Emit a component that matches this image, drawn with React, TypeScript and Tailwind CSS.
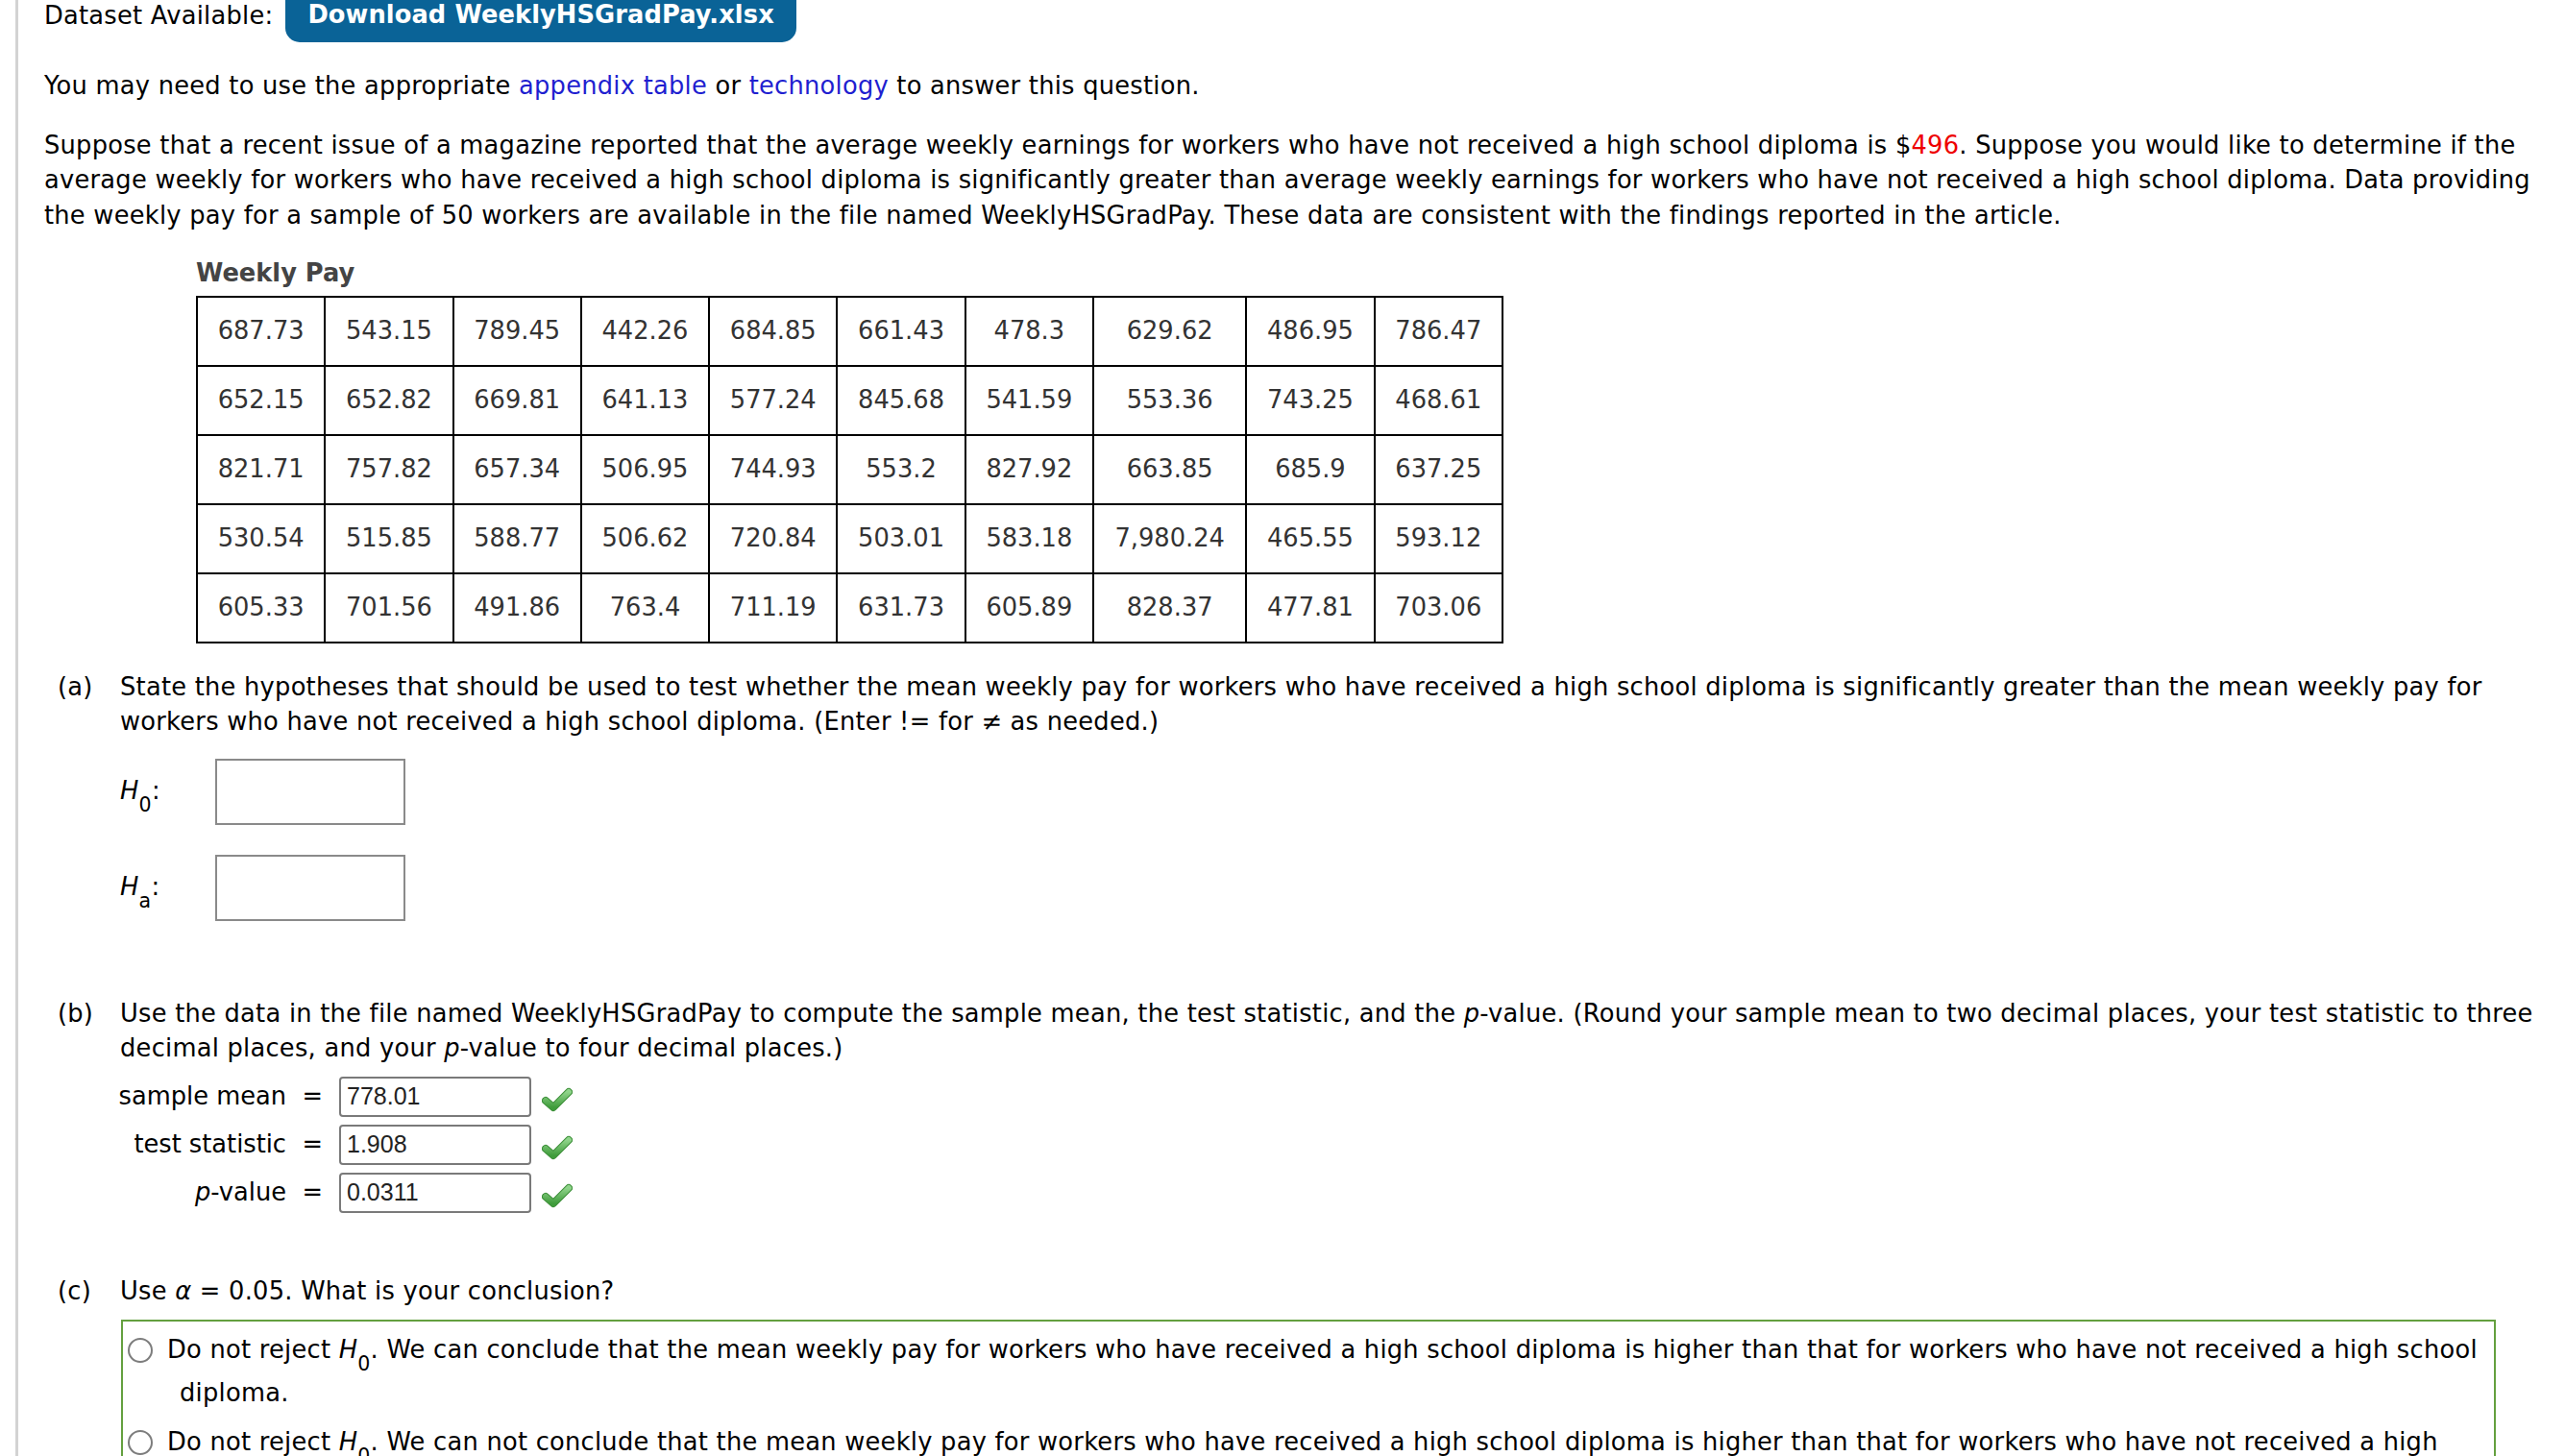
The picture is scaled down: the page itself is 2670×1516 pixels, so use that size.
import React from 'react';

const PAY: string[][] = [
  ['687.73', '543.15', '789.45', '442.26', '684.85', '661.43', '478.3', '629.62', '486.95', '786.47'],
  ['652.15', '652.82', '669.81', '641.13', '577.24', '845.68', '541.59', '553.36', '743.25', '468.61'],
  ['821.71', '757.82', '657.34', '506.95', '744.93', '553.2', '827.92', '663.85', '685.9', '637.25'],
  ['530.54', '515.85', '588.77', '506.62', '720.84', '503.01', '583.18', '7,980.24', '465.55', '593.12'],
  ['605.33', '701.56', '491.86', '763.4', '711.19', '631.73', '605.89', '828.37', '477.81', '703.06'],
];

const OPTIONS = [
  'We can conclude that the mean weekly pay for workers who have received a high school diploma is higher than that for workers who have not received a high school diploma.',
  'We can not conclude that the mean weekly pay for workers who have received a high school diploma is higher than that for workers who have not received a high school diploma.',
];

function H({ sub }: { sub: string }) {
  return (
    <span>
      <i>H</i>
      <sub className="text-[0.8em] leading-none align-[-0.4em]">{sub}</sub>
    </span>
  );
}

function Check() {
  return (
    <svg width="32" height="26" viewBox="0 0 32 26" className="ml-[11px] mt-[6px]">
      <defs>
        <linearGradient id="ck" x1="0" y1="0" x2="0" y2="1">
          <stop offset="0" stopColor="#8fd48a" />
          <stop offset="1" stopColor="#3f9c3b" />
        </linearGradient>
      </defs>
      <path d="M4 14 L12 21 L28 5" fill="none" stroke="#3d8f39" strokeWidth="8" strokeLinecap="round" strokeLinejoin="round" />
      <path d="M4 14 L12 21 L28 5" fill="none" stroke="url(#ck)" strokeWidth="6" strokeLinecap="round" strokeLinejoin="round" />
    </svg>
  );
}

function AnswerRow({ label, value }: { label: React.ReactNode; value: string }) {
  return (
    <div className="flex items-center h-[42px]">
      <div className="w-[173px] flex justify-end whitespace-nowrap tracking-normal">{label}</div>
      <div className="w-[55px] text-center">=</div>
      <div className="w-[200px] h-[42px] border-2 border-[#7a7a7a] rounded-[4px] pl-[6px] flex items-center font-['Liberation_Sans',Arial,sans-serif] text-[25px] tracking-normal text-[#222]">
        {value}
      </div>
      <Check />
    </div>
  );
}

function Part({ tag, children }: { tag: string; children: React.ReactNode }) {
  return (
    <div className="flex pl-[14px]">
      <div className="w-[65px] shrink-0">{tag}</div>
      <div className="flex-1">{children}</div>
    </div>
  );
}

function Radio({ reject, text }: { reject: boolean; text: string }) {
  return (
    <div className="pl-[59px] -indent-[54px] leading-[45px] pr-[12px]">
      <span className="inline-block w-[26px] h-[26px] rounded-full border-2 border-[#7d7d7d] bg-white align-[-5px] mr-[15px] indent-0"></span>
      {reject ? 'Reject ' : 'Do not reject '}
      <H sub="0" />. {text}
    </div>
  );
}

export default function App() {
  return (
    <div className="min-h-screen bg-white overflow-hidden font-['DejaVu_Sans',Verdana,sans-serif] text-[25.7px] leading-[36.5px] tracking-[0.26px] text-black">
      <div className="ml-[16px] border-l-[3px] border-[#d3d3d3] pl-[27px] w-[2644px] min-h-[1600px] -mt-[14px]">
        <div className="w-[2614px]">
          {/* dataset */}
          <div className="flex items-center gap-[13px] h-[58px] pt-[2px]">
            <span>Dataset Available:</span>
            <span className="h-[58px] -mt-[2px] px-[23px] rounded-[15px] bg-[#0a6397] text-white font-bold tracking-[0.1px] flex items-center">
              Download WeeklyHSGradPay.xlsx
            </span>
          </div>

          <p className="mt-[27px]">
            You may need to use the appropriate <span className="text-[#1f1fd0]">appendix table</span> or{' '}
            <span className="text-[#1f1fd0]">technology</span> to answer this question.
          </p>

          <p className="mt-[25px]">
            Suppose that a recent issue of a magazine reported that the average weekly earnings for workers who have not
            received a high school diploma is $<span className="text-[#ee0000]">496</span>. Suppose you would like to
            determine if the average weekly for workers who have received a high school diploma is significantly greater
            than average weekly earnings for workers who have not received a high school diploma. Data providing the
            weekly pay for a sample of 50 workers are available in the file named WeeklyHSGradPay. These data are
            consistent with the findings reported in the article.
          </p>

          {/* table */}
          <div className="ml-[158px] mt-[24px]">
            <div className="font-bold text-[#444] tracking-normal">Weekly Pay</div>
            <table className="mt-[5px] border-collapse table-fixed w-[1361px] text-[#333] tracking-normal">
              <tbody>
                {PAY.map((row, i) => (
                  <tr key={i}>
                    {row.map((v, j) => (
                      <td
                        key={j}
                        className={`border-2 border-black h-[72px] p-0 text-center ${j === 7 ? 'w-[159px]' : 'w-[133px]'}`}
                      >
                        {v}
                      </td>
                    ))}
                  </tr>
                ))}
              </tbody>
            </table>
          </div>

          {/* (a) */}
          <div className="mt-[27px]">
            <Part tag="(a)">
              State the hypotheses that should be used to test whether the mean weekly pay for workers who have received
              a high school diploma is significantly greater than the mean weekly pay for workers who have not received a
              high school diploma. (Enter != for ≠ as needed.)
              <div className="mt-[20px] flex items-center">
                <div className="w-[99px]">
                  <H sub="0" />:
                </div>
                <div className="w-[198px] h-[69px] border-2 border-[#8a8a8a]"></div>
              </div>
              <div className="mt-[31px] flex items-center">
                <div className="w-[99px]">
                  <H sub="a" />:
                </div>
                <div className="w-[198px] h-[69px] border-2 border-[#8a8a8a]"></div>
              </div>
            </Part>
          </div>

          {/* (b) */}
          <div className="mt-[78px]">
            <Part tag="(b)">
              Use the data in the file named WeeklyHSGradPay to compute the sample mean, the test statistic, and the{' '}
              <i>p</i>-value. (Round your sample mean to two decimal places, your test statistic to three decimal places,
              and your <i>p</i>-value to four decimal places.)
            </Part>
            <div className="mt-[11px] ml-[79px] flex flex-col gap-[8px]">
              <AnswerRow label="sample mean" value="778.01" />
              <AnswerRow label="test statistic" value="1.908" />
              <AnswerRow
                label={
                  <span>
                    <i>p</i>-value
                  </span>
                }
                value="0.0311"
              />
            </div>
          </div>

          {/* (c) */}
          <div className="mt-[63px]">
            <Part tag="(c)">
              Use <i>α</i> = 0.05. What is your conclusion?
            </Part>
            <div className="ml-[80px] mr-[62px] mt-[12px] border-2 border-[#64a03f] pt-[7px] pb-[8px] flex flex-col gap-[6px]">
              {OPTIONS.map((t, i) => (
                <Radio key={i} reject={false} text={t} />
              ))}
              {OPTIONS.map((t, i) => (
                <Radio key={'r' + i} reject text={t} />
              ))}
            </div>
          </div>
        </div>
      </div>
    </div>
  );
}
